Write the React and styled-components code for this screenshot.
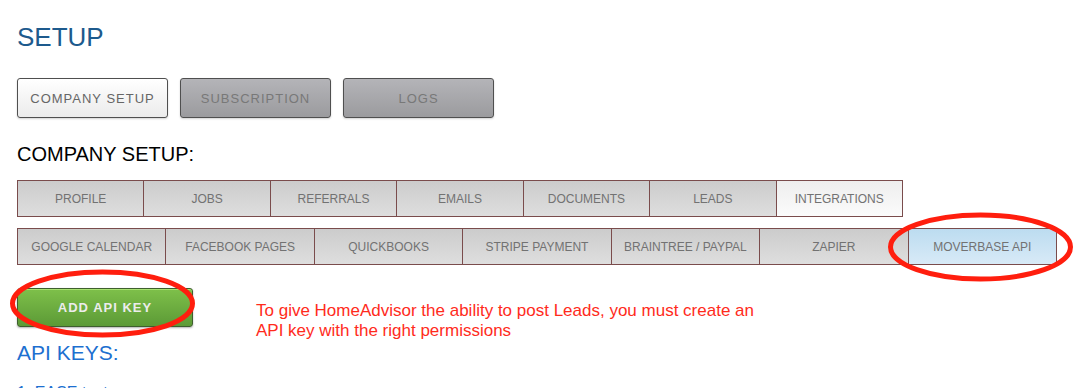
import React from "react";
import styled, { createGlobalStyle } from "styled-components";

const Global = createGlobalStyle`
  html, body { margin: 0; padding: 0; background: #fff; }
  body { font-family: "Liberation Sans", Arial, Helvetica, sans-serif; }
  * { box-sizing: border-box; }
`;

const Page = styled.div`
  position: relative;
  width: 1080px;
  height: 388px;
  overflow: hidden;
  padding: 24px 0 0 17px;
`;

const Title = styled.h1`
  margin: 0;
  font-size: 26px;
  line-height: 26px;
  font-weight: normal;
  color: #1d5a8d;
`;

const TopBar = styled.div`
  display: flex;
  gap: 12px;
  margin-top: 28px;
`;

const TopButton = styled.div`
  width: 151px;
  height: 40px;
  display: flex;
  align-items: center;
  justify-content: center;
  border: 1px solid #4f4f4f;
  border-radius: 3px;
  font-size: 13px;
  letter-spacing: 1px;
  color: ${(p) => (p.$active ? "#666" : "#787878")};
  background: ${(p) =>
    p.$active
      ? "linear-gradient(#ffffff, #ebebeb)"
      : "linear-gradient(#b4b4b8, #9b9b9e)"};
  box-shadow: 0 1px 2px rgba(0, 0, 0, 0.18);
`;

const Heading = styled.h2`
  margin: 26px 0 0;
  font-size: 20px;
  line-height: 20px;
  font-weight: normal;
  color: #000;
`;

const TabRow = styled.div`
  display: flex;
  width: ${(p) => p.$width}px;
  height: 37px;
  margin-top: ${(p) => p.$mt}px;
  border: 1px solid #7a4c4c;
`;

const Tab = styled.div`
  flex: 1;
  display: flex;
  align-items: center;
  justify-content: center;
  font-size: 12px;
  color: #727272;
  white-space: nowrap;
  & + & { border-left: 1px solid #7a4c4c; }
  background: ${(p) =>
    p.$variant === "active"
      ? "linear-gradient(#eeeeee, #fbfbfb)"
      : p.$variant === "blue"
      ? "linear-gradient(#bcdcf0, #d8eaf7)"
      : "linear-gradient(#cccccc, #dedede)"};
`;

const ActionRow = styled.div`
  display: flex;
  align-items: flex-start;
  gap: 63px;
  margin-top: 23px;
`;

const GreenButton = styled.div`
  width: 176px;
  height: 39px;
  display: flex;
  align-items: center;
  justify-content: center;
  border: 1px solid #3e5e2e;
  border-radius: 3px;
  background: linear-gradient(#7ec04a, #5c9a36);
  box-shadow: inset 0 1px 0 #a8e272, 0 1px 2px rgba(0, 0, 0, 0.3);
  color: #ececec;
  font-weight: bold;
  font-size: 13px;
  letter-spacing: 1px;
`;

const Note = styled.p`
  margin: 13px 0 0;
  width: 525px;
  font-size: 17px;
  line-height: 20px;
  color: #ff2b1c;
`;

const SubHeading = styled.h3`
  margin: 1px 0 0;
  font-size: 21px;
  line-height: 21px;
  font-weight: normal;
  color: #1d6fd0;
`;

const ListItem = styled.div`
  margin-top: 20px;
  font-size: 16px;
  line-height: 20px;
  color: #1d6fd0;
`;

const Annotation = styled.svg`
  position: absolute;
  left: 0;
  top: 0;
  pointer-events: none;
`;

const row1 = ["PROFILE", "JOBS", "REFERRALS", "EMAILS", "DOCUMENTS", "LEADS", "INTEGRATIONS"];
const row2 = [
  "GOOGLE CALENDAR",
  "FACEBOOK PAGES",
  "QUICKBOOKS",
  "STRIPE PAYMENT",
  "BRAINTREE / PAYPAL",
  "ZAPIER",
  "MOVERBASE API",
];

export default function App() {
  return (
    <>
      <Global />
      <Page>
        <Title>SETUP</Title>
        <TopBar>
          <TopButton $active>COMPANY SETUP</TopButton>
          <TopButton>SUBSCRIPTION</TopButton>
          <TopButton>LOGS</TopButton>
        </TopBar>
        <Heading>COMPANY SETUP:</Heading>
        <TabRow $width={886} $mt={16}>
          {row1.map((t) => (
            <Tab key={t} $variant={t === "INTEGRATIONS" ? "active" : undefined}>
              {t}
            </Tab>
          ))}
        </TabRow>
        <TabRow $width={1040} $mt={11}>
          {row2.map((t) => (
            <Tab key={t} $variant={t === "MOVERBASE API" ? "blue" : undefined}>
              {t}
            </Tab>
          ))}
        </TabRow>
        <ActionRow>
          <GreenButton>ADD API KEY</GreenButton>
          <Note>
            To give HomeAdvisor the ability to post Leads, you must create an API key
            with the right permissions
          </Note>
        </ActionRow>
        <SubHeading>API KEYS:</SubHeading>
        <ListItem>1. EASE test</ListItem>
        <Annotation width="1080" height="388" viewBox="0 0 1080 388">
          <ellipse cx="980.5" cy="247" rx="90" ry="32" fill="none" stroke="#ff1e0e" strokeWidth="5" />
          <ellipse cx="102.5" cy="303.5" rx="90" ry="31.5" fill="none" stroke="#ff1e0e" strokeWidth="5" />
        </Annotation>
      </Page>
    </>
  );
}
